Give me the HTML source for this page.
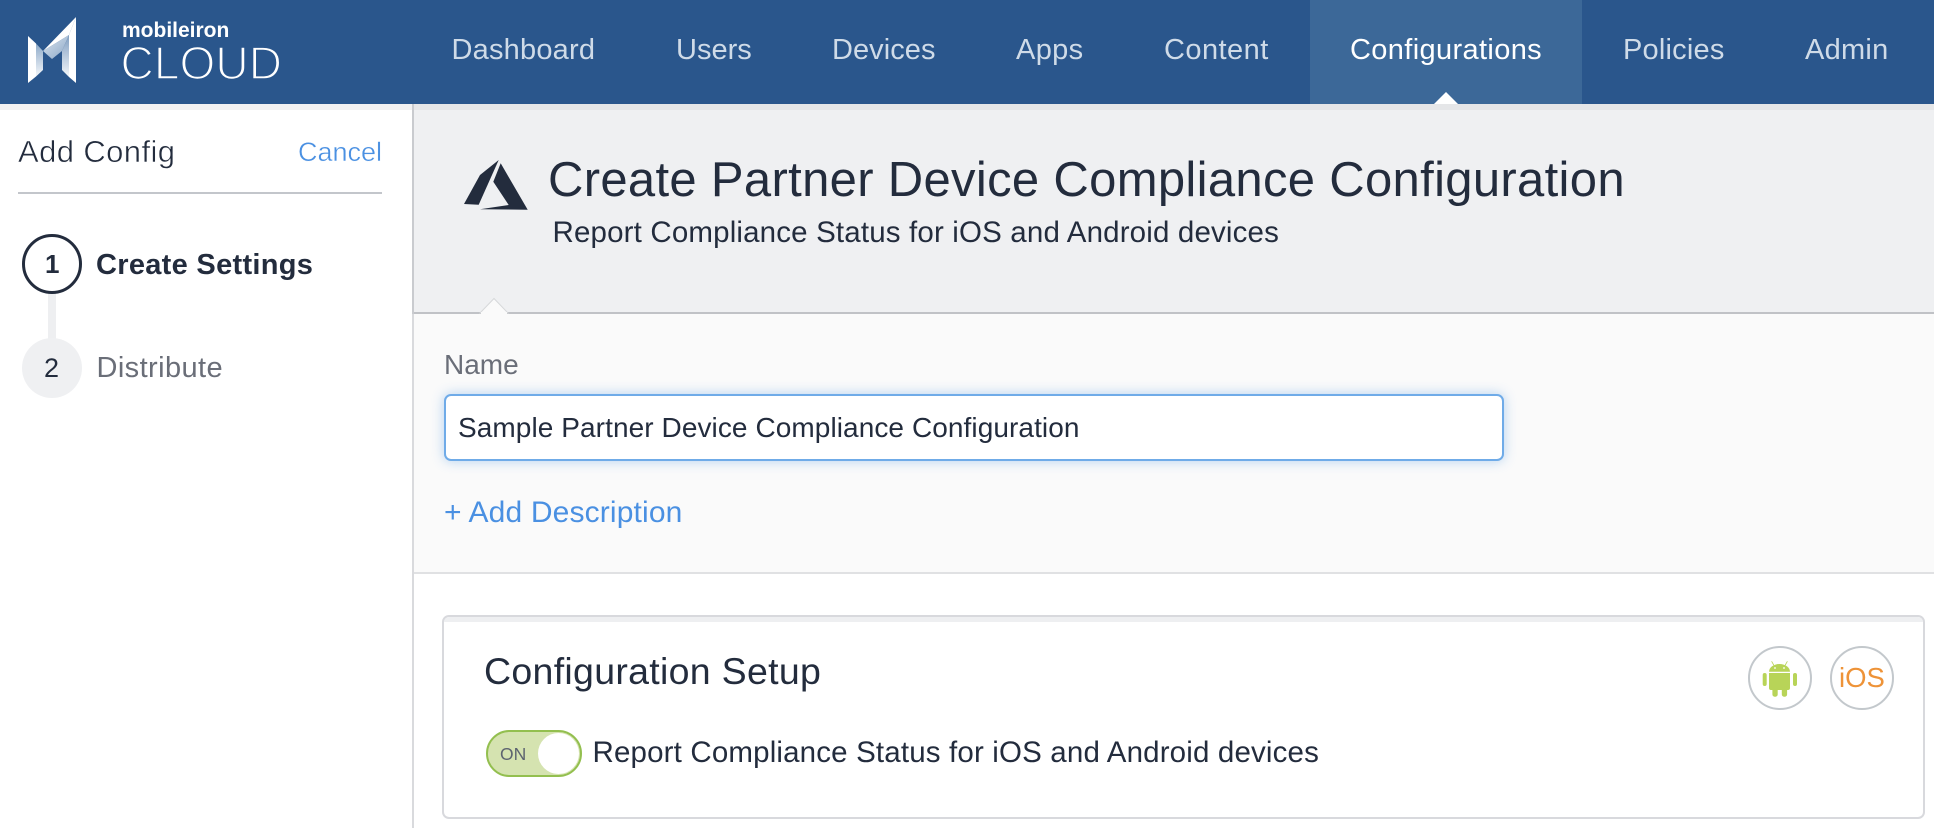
<!DOCTYPE html>
<html><head><meta charset="utf-8"><title>Create Partner Device Compliance Configuration</title>
<style>
html,body{margin:0;padding:0;background:#fff}
#p{position:relative;width:1934px;height:828px;overflow:hidden;background:#fff;font-family:"Liberation Sans",Arial,sans-serif;color:#232c3d}
.b{position:absolute}
.t{position:absolute;white-space:nowrap;line-height:1.2}
.n{top:32.6px;font-size:29px;letter-spacing:.2px;color:#cfdbe8}
</style></head><body><div id="p">
<div class="b" style="left:0;top:0;width:1934px;height:104px;background:#2a568c"></div>
<div class="b" style="left:1310px;top:0;width:272px;height:104px;background:#3c6898"></div>
<div class="b" style="left:0;top:104px;width:1934px;height:6px;background:#e5e6e8"></div>
<div class="b" style="left:0;top:104px;width:412px;height:6px;background:#f1f1f2"></div>
<svg class="b" style="left:0;top:0" width="120" height="104" viewBox="0 0 120 104">
<defs>
<linearGradient id="g1" x1="0" y1="0" x2="0" y2="1"><stop offset="0" stop-color="#8fabc9"/><stop offset="1" stop-color="#f4f7fa"/></linearGradient>
<linearGradient id="g2" x1="0" y1="0" x2="0" y2="1"><stop offset="0" stop-color="#7f9dc0"/><stop offset="1" stop-color="#f4f7fa"/></linearGradient>
<linearGradient id="g3" x1="0" y1="0" x2="1" y2="1"><stop offset="0" stop-color="#dbe5ef"/><stop offset="1" stop-color="#8aa6c6"/></linearGradient>
</defs>
<polygon points="28,36 36,43.5 36,76.5 28,83" fill="#fff"/>
<polygon points="36,43.5 43,51 43,70 36,76.5" fill="url(#g1)"/>
<polygon points="76,17 43,51 69,35" fill="#fff"/>
<polygon points="43,51 52,59 62,51 69,35" fill="url(#g3)"/>
<polygon points="62,51 69,35 69,77 62,70" fill="url(#g2)"/>
<polygon points="69,35 76,17 76,83 69,77" fill="#fff"/>
</svg>
<div class="t" style="left:122px;top:17.5px;font-size:21px;font-weight:bold;color:#fff">mobileiron</div>
<div class="t" style="left:120.5px;top:36px;font-size:46px;letter-spacing:.1px;color:#fff;-webkit-text-stroke:1.6px #2a568c">CLOUD</div>
<div class="t n" style="left:451.5px">Dashboard</div>
<div class="t n" style="left:676px;letter-spacing:0">Users</div>
<div class="t n" style="left:832px;letter-spacing:.05px">Devices</div>
<div class="t n" style="left:1016px;letter-spacing:.35px">Apps</div>
<div class="t n" style="left:1164px;letter-spacing:.45px">Content</div>
<div class="t n" style="left:1350px;color:#fff;letter-spacing:.36px">Configurations</div>
<div class="t n" style="left:1623px;letter-spacing:.2px">Policies</div>
<div class="t n" style="left:1805px;letter-spacing:.25px">Admin</div>
<svg class="b" style="left:1430px;top:90px" width="32" height="14"><polygon points="4,14 16,2 28,14" fill="#fff"/></svg>

<!-- sidebar -->
<div class="b" style="left:412px;top:104px;width:2px;height:210px;background:#c9cbcf"></div>
<div class="b" style="left:412px;top:314px;width:2px;height:514px;background:#d9dadd"></div>
<div class="t" style="left:18px;top:132.5px;font-size:31px;letter-spacing:.4px;color:#232c3d;-webkit-text-stroke:.5px #fff">Add Config</div>
<div class="t" style="left:298px;top:136.3px;font-size:27px;color:#4a90e2;-webkit-text-stroke:.4px #fff">Cancel</div>
<div class="b" style="left:18px;top:192px;width:364px;height:2px;background:#c3c6cb"></div>
<div class="b" style="left:48px;top:290px;width:8px;height:54px;background:#eeeff1"></div>
<div class="b" style="left:22px;top:234px;width:54px;height:54px;border:3px solid #232c3d;border-radius:50%;background:#fff"></div>
<div class="b" style="left:22px;top:338px;width:60px;height:60px;border-radius:50%;background:#eff0f2"></div>
<div class="t" style="left:45px;top:248.5px;font-size:26px;font-weight:bold">1</div>
<div class="t" style="left:44px;top:351.7px;font-size:27px">2</div>
<div class="t" style="left:96px;top:247.6px;font-size:29px;font-weight:bold;letter-spacing:.3px">Create Settings</div>
<div class="t" style="left:96.5px;top:351.1px;font-size:29px;letter-spacing:.4px;color:#6a6e78">Distribute</div>

<!-- main header -->
<div class="b" style="left:414px;top:110px;width:1520px;height:202px;background:#eff0f2"></div>
<div class="b" style="left:414px;top:312px;width:1520px;height:2px;background:#c0c2c6"></div>
<div class="b" style="left:414px;top:314px;width:1520px;height:258px;background:#fafafa"></div>
<div class="b" style="left:414px;top:572px;width:1520px;height:2px;background:#e0e1e3"></div>
<svg class="b" style="left:476px;top:296px" width="36" height="19"><polygon points="4,17 18,2.5 32,17" fill="#fafafa" stroke="#d6d8da" stroke-width="1"/><rect x="5" y="16" width="26" height="3" fill="#fafafa"/></svg>
<svg class="b" style="left:0;top:0" width="560" height="230"><polygon points="498.7,160 480,175 464,204 478.7,204.7" fill="#232c3d"/><polygon points="500.7,163.3 493.3,181.7 508.7,205 480,209.3 527.7,209.7" fill="#232c3d"/></svg>
<div class="t" style="left:548px;top:150.7px;font-size:49px;letter-spacing:.32px">Create Partner Device Compliance Configuration</div>
<div class="t" style="left:552.5px;top:214.6px;font-size:29.5px;letter-spacing:.16px">Report Compliance Status for iOS and Android devices</div>

<div class="t" style="left:444px;top:347.6px;font-size:28px;color:#6a6e78">Name</div>
<div class="b" style="left:444px;top:394px;width:1056px;height:63px;border:2px solid #6fabe8;border-radius:7px;background:#fff;box-shadow:0 0 12px rgba(90,160,230,.45)"></div>
<div class="t" style="left:458px;top:411.2px;font-size:28px;letter-spacing:.08px">Sample Partner Device Compliance Configuration</div>
<div class="t" style="left:444px;top:495.4px;font-size:30px;letter-spacing:.15px;color:#4a90e2">+ Add Description</div>

<!-- card -->
<div class="b" style="left:442px;top:615px;width:1479px;height:200px;border:2px solid #d8d9dd;border-radius:7px;background:#fff"></div>
<div class="b" style="left:444px;top:617px;width:1479px;height:5px;background:#eeeff1;border-radius:5px 5px 0 0"></div>
<div class="t" style="left:484px;top:649px;font-size:37.5px;letter-spacing:.3px">Configuration Setup</div>
<div class="b" style="left:486px;top:730px;width:92px;height:43px;border:2px solid #93bf4f;border-radius:24px;background:#d5e3b0"></div>
<div class="b" style="left:538px;top:733px;width:41px;height:41px;border-radius:50%;background:#fff"></div>
<div class="t" style="left:500px;top:743.7px;font-size:17.5px;color:#5d6470">ON</div>
<div class="t" style="left:592.5px;top:735px;font-size:29.5px;letter-spacing:.16px">Report Compliance Status for iOS and Android devices</div>
<div class="b" style="left:1748px;top:646px;width:60px;height:60px;border:2.5px solid #c3c8cc;border-radius:50%;background:#fff"></div>
<div class="b" style="left:1830px;top:646px;width:60px;height:60px;border:2.5px solid #c3c8cc;border-radius:50%;background:#fff"></div>
<svg class="b" style="left:1748px;top:646px" width="64" height="64" viewBox="1748 646 64 64" fill="#b8d458">
<path d="M1769 671.7a10.5 7.7 0 0 1 21 0z"/>
<path d="M1774 665.5l-2.4-4.2M1785 665.5l2.4-4.2" stroke="#b8d458" stroke-width=".8" fill="none"/>
<circle cx="1775" cy="668" r=".9" fill="#fff"/><circle cx="1784" cy="668" r=".9" fill="#fff"/>
<path d="M1769 673h21v15a2 2 0 0 1-2 2h-17a2 2 0 0 1-2-2z"/>
<rect x="1762.7" y="673" width="4" height="13" rx="2"/><rect x="1793" y="673" width="4" height="13" rx="2"/>
<rect x="1772.4" y="687" width="5.3" height="9.7" rx="2.2"/><rect x="1781.8" y="687" width="5.3" height="9.7" rx="2.2"/>
</svg>
<div class="t" style="left:1839px;top:661px;font-size:27.5px;color:#ee9338">iOS</div>
</div></body></html>
